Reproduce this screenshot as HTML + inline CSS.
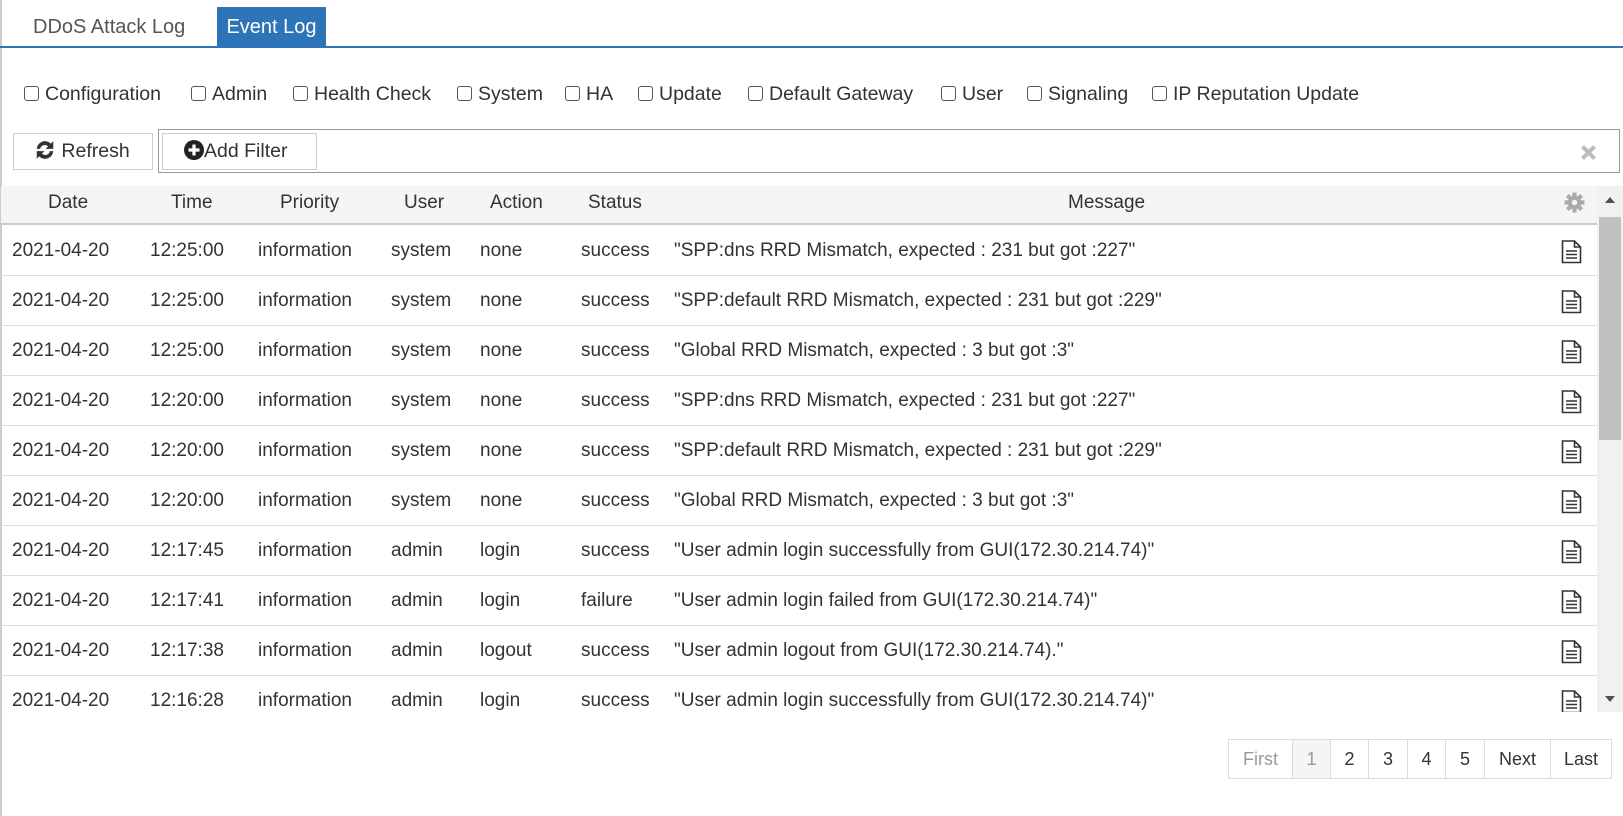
<!DOCTYPE html>
<html><head><meta charset="utf-8"><style>
*{margin:0;padding:0;box-sizing:border-box}
body{width:1623px;height:816px;overflow:hidden;background:#fff;font-family:"Liberation Sans",sans-serif;color:#333;position:relative;font-size:19px}
.a{position:absolute;white-space:nowrap}
.cb{position:absolute;top:86px;width:15px;height:15px;border:1px solid #555;border-radius:3px;background:#fff}
.cl{position:absolute;top:83px;font-size:19.5px;color:#333}
.row{position:absolute;left:1px;width:1596px;height:50px;border-bottom:1px solid #ddd}
.row span{position:absolute;top:14px;white-space:nowrap}
.pg{position:absolute;top:739px;height:40px;border:1px solid #ddd;border-left:none;font-size:18px;line-height:38px;text-align:center}
</style></head><body>
<div class="a" style="left:0;top:0;width:2px;height:816px;background:#ccc"></div>
<div class="a" style="left:33px;top:16px;font-size:20px;color:#555">DDoS Attack Log</div>
<div class="a" style="left:217px;top:7px;width:109px;height:40px;background:#2d74b8;color:#fff;font-size:20px;line-height:40px;text-align:center">Event Log</div>
<div class="a" style="left:0;top:46px;width:1623px;height:2px;background:#2d74b8"></div>

<div class="cb" style="left:24px"></div><div class="cl" style="left:45px">Configuration</div>
<div class="cb" style="left:191px"></div><div class="cl" style="left:212px">Admin</div>
<div class="cb" style="left:293px"></div><div class="cl" style="left:314px">Health Check</div>
<div class="cb" style="left:457px"></div><div class="cl" style="left:478px">System</div>
<div class="cb" style="left:565px"></div><div class="cl" style="left:586px">HA</div>
<div class="cb" style="left:638px"></div><div class="cl" style="left:659px">Update</div>
<div class="cb" style="left:748px"></div><div class="cl" style="left:769px">Default Gateway</div>
<div class="cb" style="left:941px"></div><div class="cl" style="left:962px">User</div>
<div class="cb" style="left:1027px"></div><div class="cl" style="left:1048px">Signaling</div>
<div class="cb" style="left:1152px"></div><div class="cl" style="left:1173px">IP Reputation Update</div>

<div class="a" style="left:13px;top:133px;width:140px;height:37px;border:1px solid #ccc;font-size:19.5px;line-height:35px;padding-left:20px">
<svg width="22" height="22" viewBox="0 0 20 20" style="vertical-align:-4px"><path d="M2.5 9a7.5 7.5 0 0 1 12.8-4.8l2.2-2.2v7h-7l2.3-2.3a4.3 4.3 0 0 0-7.2 2.3z M17.5 11a7.5 7.5 0 0 1-12.8 4.8l-2.2 2.2v-7h7l-2.3 2.3a4.3 4.3 0 0 0 7.2-2.3z" fill="#333"/></svg> Refresh</div>
<div class="a" style="left:158px;top:129px;width:1462px;height:44px;border:1px solid #999"></div>
<div class="a" style="left:162px;top:133px;width:155px;height:37px;border:1px solid #ccc;font-size:19.5px;line-height:35px;padding-left:21px">
<svg width="20" height="20" viewBox="0 0 20 20" style="vertical-align:-3px"><circle cx="10" cy="10" r="10" fill="#222"/><path d="M10 4.5v11M4.5 10h11" stroke="#fff" stroke-width="3.2"/></svg>Add Filter</div>
<svg class="a" style="left:1580px;top:144px" width="17" height="17" viewBox="0 0 17 17"><path d="M2.5 2.5l12 12M14.5 2.5l-12 12" stroke="#bbb" stroke-width="4"/></svg>

<div class="a" style="left:1px;top:186px;width:1596px;height:39px;background:#f5f5f5;border-bottom:2px solid #ccc"></div>
<div class="a" style="top:192px;left:48px">Date</div>
<div class="a" style="top:192px;left:171px">Time</div>
<div class="a" style="top:192px;left:280px">Priority</div>
<div class="a" style="top:192px;left:404px">User</div>
<div class="a" style="top:192px;left:490px">Action</div>
<div class="a" style="top:192px;left:588px">Status</div>
<div class="a" style="top:192px;left:1068px">Message</div>
<svg class="a" style="left:1564px;top:192px" width="21" height="21" viewBox="0 0 20 20"><g fill="#aaa"><circle cx="10" cy="10" r="6.5"/><rect x="8" y="0.5" width="4" height="19"/><rect x="0.5" y="8" width="19" height="4"/><rect x="8" y="0.5" width="4" height="19" transform="rotate(45 10 10)"/><rect x="8" y="0.5" width="4" height="19" transform="rotate(-45 10 10)"/></g><circle cx="10" cy="10" r="2.6" fill="#f5f5f5"/></svg>

<div class="a" style="left:1597px;top:186px;width:26px;height:526px;background:#f1f1f1"></div>
<div class="a" style="left:1599px;top:217px;width:22px;height:223px;background:#c1c1c1"></div>
<div class="a" style="left:1605px;top:197px;width:0;height:0;border-left:5px solid transparent;border-right:5px solid transparent;border-bottom:6px solid #505050"></div>
<div class="a" style="left:1605px;top:696px;width:0;height:0;border-left:5px solid transparent;border-right:5px solid transparent;border-top:6px solid #505050"></div>

<div class="pg" style="left:1228px;width:65px;border-left:1px solid #ddd;color:#999">First</div>
<div class="pg" style="left:1293px;width:38px;background:#f5f5f5;color:#999">1</div>
<div class="pg" style="left:1331px;width:38px">2</div>
<div class="pg" style="left:1369px;width:39px">3</div>
<div class="pg" style="left:1408px;width:38px">4</div>
<div class="pg" style="left:1446px;width:39px">5</div>
<div class="pg" style="left:1485px;width:66px">Next</div>
<div class="pg" style="left:1551px;width:61px">Last</div>

<div style="position:absolute;left:0;top:226px;width:1597px;height:486px;overflow:hidden">
<div class="row" style="top:0"><span style="left:11px">2021-04-20</span><span style="left:149px">12:25:00</span><span style="left:257px">information</span><span style="left:390px">system</span><span style="left:479px">none</span><span style="left:580px">success</span><span style="left:673px">"SPP:dns RRD Mismatch, expected : 231 but got :227"</span></div>
<div class="row" style="top:50px"><span style="left:11px">2021-04-20</span><span style="left:149px">12:25:00</span><span style="left:257px">information</span><span style="left:390px">system</span><span style="left:479px">none</span><span style="left:580px">success</span><span style="left:673px">"SPP:default RRD Mismatch, expected : 231 but got :229"</span></div>
<div class="row" style="top:100px"><span style="left:11px">2021-04-20</span><span style="left:149px">12:25:00</span><span style="left:257px">information</span><span style="left:390px">system</span><span style="left:479px">none</span><span style="left:580px">success</span><span style="left:673px">"Global RRD Mismatch, expected : 3 but got :3"</span></div>
<div class="row" style="top:150px"><span style="left:11px">2021-04-20</span><span style="left:149px">12:20:00</span><span style="left:257px">information</span><span style="left:390px">system</span><span style="left:479px">none</span><span style="left:580px">success</span><span style="left:673px">"SPP:dns RRD Mismatch, expected : 231 but got :227"</span></div>
<div class="row" style="top:200px"><span style="left:11px">2021-04-20</span><span style="left:149px">12:20:00</span><span style="left:257px">information</span><span style="left:390px">system</span><span style="left:479px">none</span><span style="left:580px">success</span><span style="left:673px">"SPP:default RRD Mismatch, expected : 231 but got :229"</span></div>
<div class="row" style="top:250px"><span style="left:11px">2021-04-20</span><span style="left:149px">12:20:00</span><span style="left:257px">information</span><span style="left:390px">system</span><span style="left:479px">none</span><span style="left:580px">success</span><span style="left:673px">"Global RRD Mismatch, expected : 3 but got :3"</span></div>
<div class="row" style="top:300px"><span style="left:11px">2021-04-20</span><span style="left:149px">12:17:45</span><span style="left:257px">information</span><span style="left:390px">admin</span><span style="left:479px">login</span><span style="left:580px">success</span><span style="left:673px">"User admin login successfully from GUI(172.30.214.74)"</span></div>
<div class="row" style="top:350px"><span style="left:11px">2021-04-20</span><span style="left:149px">12:17:41</span><span style="left:257px">information</span><span style="left:390px">admin</span><span style="left:479px">login</span><span style="left:580px">failure</span><span style="left:673px">"User admin login failed from GUI(172.30.214.74)"</span></div>
<div class="row" style="top:400px"><span style="left:11px">2021-04-20</span><span style="left:149px">12:17:38</span><span style="left:257px">information</span><span style="left:390px">admin</span><span style="left:479px">logout</span><span style="left:580px">success</span><span style="left:673px">"User admin logout from GUI(172.30.214.74)."</span></div>
<div class="row" style="top:450px;border:none"><span style="left:11px">2021-04-20</span><span style="left:149px">12:16:28</span><span style="left:257px">information</span><span style="left:390px">admin</span><span style="left:479px">login</span><span style="left:580px">success</span><span style="left:673px">"User admin login successfully from GUI(172.30.214.74)"</span></div>
<svg style="position:absolute;left:1561px;top:0" width="24" height="486">
<defs><g id="d"><path d="M1.5 1h12l6 6v15.5h-18z M13.5 1v6h6" fill="none" stroke="#333" stroke-width="1.6"/><path d="M5 11h11M5 14.5h11M5 18h11" stroke="#333" stroke-width="1.6"/></g></defs>
<use href="#d" y="14"/><use href="#d" y="64"/><use href="#d" y="114"/><use href="#d" y="164"/><use href="#d" y="214"/><use href="#d" y="264"/><use href="#d" y="314"/><use href="#d" y="364"/><use href="#d" y="414"/><use href="#d" y="464"/>
</svg>
</div>
</body></html>
